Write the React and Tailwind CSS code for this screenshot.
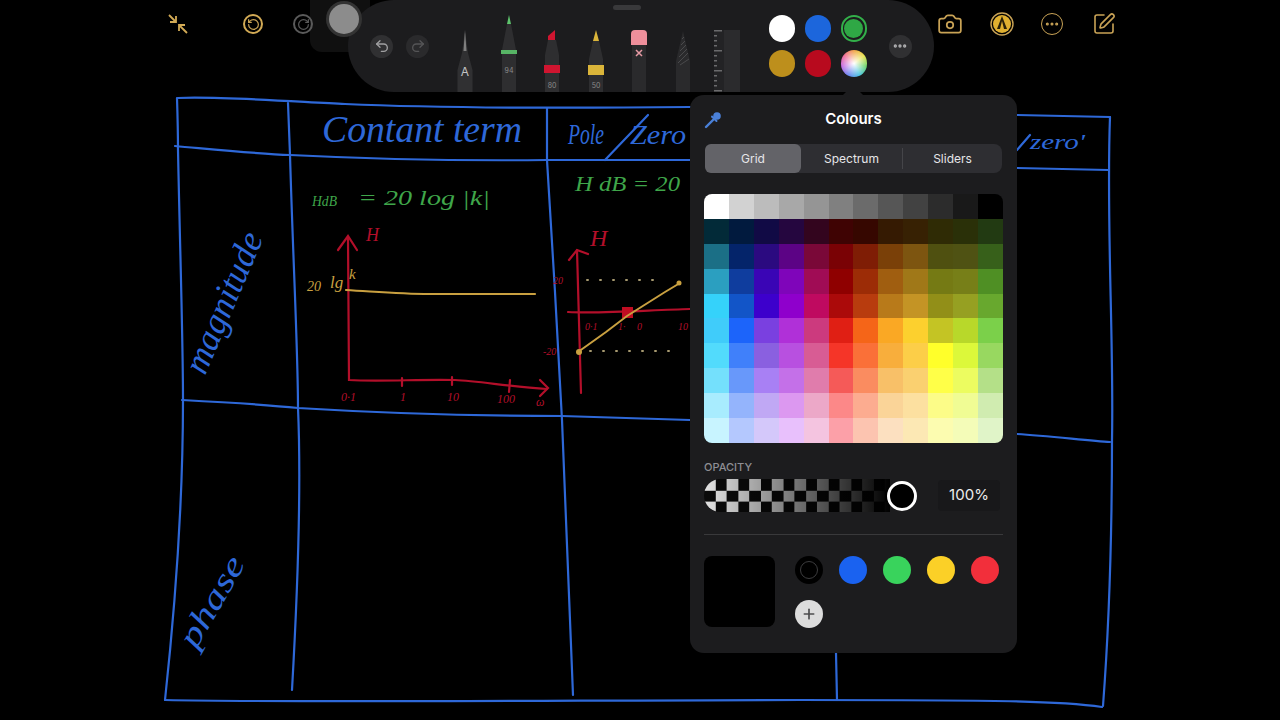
import { Camera, Ellipsis, Plus, Redo2, RotateCcw, RotateCw, SquarePen, Undo2 } from "lucide-react";

const GRID_COLORS = [
  "bg-[#ffffff]", "bg-[#d2d2d2]", "bg-[#bcbcbc]", "bg-[#a8a8a8]", "bg-[#959595]", "bg-[#808080]", "bg-[#6b6b6b]", "bg-[#565656]", "bg-[#424242]", "bg-[#2c2c2c]", "bg-[#191919]", "bg-[#000000]",
  "bg-[#022a38]", "bg-[#011a3e]", "bg-[#110a45]", "bg-[#25063f]", "bg-[#33051e]", "bg-[#3f0303]", "bg-[#360700]", "bg-[#351a02]", "bg-[#372103]", "bg-[#2f2b05]", "bg-[#2a3008]", "bg-[#223a12]",
  "bg-[#1b6f86]", "bg-[#04246a]", "bg-[#2b0a80]", "bg-[#5c0385]", "bg-[#7a0838]", "bg-[#7a0205]", "bg-[#7f1d05]", "bg-[#7a4008]", "bg-[#7d5510]", "bg-[#4f5010]", "bg-[#4f5213]", "bg-[#37601a]",
  "bg-[#2b9fc0]", "bg-[#0f3d9e]", "bg-[#3a05b5]", "bg-[#7f05ba]", "bg-[#a00c55]", "bg-[#8f0000]", "bg-[#9c2c06]", "bg-[#a05e10]", "bg-[#a07818]", "bg-[#757a14]", "bg-[#777f18]", "bg-[#4f8f24]",
  "bg-[#35d2fa]", "bg-[#1255c8]", "bg-[#3d00cc]", "bg-[#8f00cc]", "bg-[#bf0a60]", "bg-[#ab0a0a]", "bg-[#b83c0e]", "bg-[#b87a1a]", "bg-[#c49425]", "bg-[#928f18]", "bg-[#96a022]", "bg-[#68a82e]",
  "bg-[#40ccfa]", "bg-[#1c64fa]", "bg-[#7a40e0]", "bg-[#b030d8]", "bg-[#cc3a7e]", "bg-[#e01f14]", "bg-[#f56518]", "bg-[#faa824]", "bg-[#fcd02e]", "bg-[#c4c424]", "bg-[#b8d82a]", "bg-[#7bd04a]",
  "bg-[#52dbfc]", "bg-[#4080fa]", "bg-[#8a60e0]", "bg-[#b850e0]", "bg-[#d85c94]", "bg-[#f53528]", "bg-[#fa7038]", "bg-[#f8ae3c]", "bg-[#fcce48]", "bg-[#ffff2a]", "bg-[#dcf83a]", "bg-[#98d860]",
  "bg-[#74e0fc]", "bg-[#6898fa]", "bg-[#a880f4]", "bg-[#c470e8]", "bg-[#e07cac]", "bg-[#f55a58]", "bg-[#fa8c60]", "bg-[#f8c068]", "bg-[#fad070]", "bg-[#ffff48]", "bg-[#ecfc60]", "bg-[#b4e088]",
  "bg-[#a8ecfe]", "bg-[#94b4fc]", "bg-[#c0a8f4]", "bg-[#dc98f0]", "bg-[#eca8c8]", "bg-[#fc8888]", "bg-[#fcac90]", "bg-[#fad498]", "bg-[#fce0a0]", "bg-[#fcfc88]", "bg-[#f0fc94]", "bg-[#d0ecb0]",
  "bg-[#c8f4ff]", "bg-[#b4c8fe]", "bg-[#d4c8fa]", "bg-[#e8c0fc]", "bg-[#f4c4e0]", "bg-[#fca0a8]", "bg-[#fcc4b0]", "bg-[#fce0c0]", "bg-[#fce8b4]", "bg-[#fcfcb0]", "bg-[#f4fcb8]", "bg-[#e0f4c8]",
];

const BLUE = "#2e68d8";
const GREEN = "#3fa64a";
const RED = "#b30f2a";
const GOLD = "#c9a040";
const INK_FONT = "'Liberation Serif', serif";

const BLUE_LINES = [
  "M178 98 C 220 96 300 102 345 104 S 500 109 690 107",
  "M1017 115 L1110 117",
  "M177 98 C 178 130 178 145 178 150 C 180 250 183 340 183 400 C 183 480 178 580 165 700",
  "M175 146 C 220 150 260 154 290 155 C 350 158 450 161 547 160 L690 160",
  "M1017 168 L1108 170",
  "M288 103 L290 155 C 293 260 298 350 298 408 C 302 500 296 620 292 690",
  "M547 108 L547 160 C 552 240 558 340 562 420 C 566 520 570 620 573 695",
  "M182 400 C 220 402 270 405 298 408 C 380 413 480 416 562 416 L690 420",
  "M1017 434 C 1050 436 1090 441 1110 442",
  "M165 700 C 300 703 600 700 800 700 S 1060 701 1102 707",
  "M1110 117 C 1106 220 1114 340 1112 440 C 1112 540 1108 640 1103 706",
  "M836 653 L837 700",
  "M605 160 L648 115",
  "M1017 150 L1030 135",
];

const RED_LINES = [
  "M348 238 L349 380 C 380 382 420 379 455 380 C 480 381 510 387 547 389",
  "M338 250 L348 236 L357 250",
  "M540 380 L548 388 L540 396",
  "M402 378 L402 386 M452 377 L452 385 M510 380 L509 392",
  "M577 250 L581 393",
  "M568 312 C 600 314 650 310 690 309",
  "M569 260 L577 250 L588 254",
];

function Ink({ x, y, size, width, children, transform }) {
  return (
    <text x={x} y={y} fontSize={size} textLength={width} lengthAdjust="spacingAndGlyphs" transform={transform}>
      {children}
    </text>
  );
}

function Canvas() {
  return (
    <svg className="absolute inset-0 h-[720px] w-[1280px]" viewBox="0 0 1280 720" fill="none">
      <g stroke={BLUE} strokeWidth="2.2" strokeLinecap="round">
        {BLUE_LINES.map((d) => (
          <path key={d} d={d} />
        ))}
      </g>
      <g fill={BLUE} fontFamily={INK_FONT} fontStyle="italic">
        <Ink x={322} y={142} size={38} width={200}>Contant term</Ink>
        <Ink x={568} y={144} size={30} width={36}>Pole</Ink>
        <Ink x={630} y={144} size={28} width={56}>Zero</Ink>
        <Ink x={1030} y={149} size={22} width={55}>zero'</Ink>
        <Ink x={0} y={0} size={36} width={150} transform="translate(205 376) rotate(-67)">magnitude</Ink>
        <Ink x={0} y={0} size={33} width={100} transform="translate(196 650) rotate(-60)">phase</Ink>
      </g>
      <g fill={GREEN} fontFamily={INK_FONT} fontStyle="italic">
        <Ink x={312} y={206} size={15} width={25}>HdB</Ink>
        <Ink x={358} y={205} size={22} width={132}>= 20 log |k|</Ink>
        <Ink x={575} y={191} size={22} width={105}>H dB = 20</Ink>
      </g>
      <g stroke={RED} strokeWidth="2.2" strokeLinecap="round">
        {RED_LINES.map((d) => (
          <path key={d} d={d} />
        ))}
      </g>
      <rect x="622" y="307" width="11" height="11" fill="#c00d22" />
      <g fill={RED} fontFamily={INK_FONT} fontStyle="italic" fontSize="12">
        <text x="366" y="241" fontSize="18">H</text>
        <text x="341" y="401">0·1</text>
        <text x="400" y="401">1</text>
        <text x="447" y="401">10</text>
        <text x="497" y="403">100</text>
        <text x="536" y="406">ω</text>
        <text x="590" y="246" fontSize="24">H</text>
        <text x="553" y="284" fontSize="10">20</text>
        <text x="543" y="355" fontSize="10">-20</text>
        <text x="585" y="330" fontSize="10">0·1</text>
        <text x="618" y="330" fontSize="10">1·</text>
        <text x="637" y="330" fontSize="10">0</text>
        <text x="678" y="330" fontSize="10">10</text>
      </g>
      <path d="M346 290 C 380 292 400 294 430 294 L535 294" stroke={GOLD} strokeWidth="2.2" strokeLinecap="round" />
      <path d="M578 352 L606 332 L627 316 L665 292 L680 283" stroke={GOLD} strokeWidth="2" strokeLinecap="round" />
      <circle cx="579" cy="352" r="3" fill={GOLD} />
      <circle cx="679" cy="283" r="2.5" fill={GOLD} />
      <path d="M587 280 H665 M590 351 H680" stroke="#a79a70" strokeWidth="2" strokeLinecap="round" strokeDasharray="1 12" />
      <g fill={GOLD} fontFamily={INK_FONT} fontStyle="italic">
        <text x="307" y="291" fontSize="14">20</text>
        <text x="330" y="288" fontSize="17">lg</text>
        <text x="349" y="279" fontSize="15">k</text>
      </g>
    </svg>
  );
}

function CollapseIcon() {
  return (
    <svg className="h-5 w-5" viewBox="0 0 20 20" fill="none" stroke="#d2aa55" strokeWidth="1.8">
      <path d="M1 1 L8 8 M2 8 H8 V2" />
      <path d="M19 19 L11 11 M11 17 V11 H17" />
    </svg>
  );
}

function NibIcon() {
  return (
    <svg className="h-6 w-6" viewBox="0 0 24 24">
      <circle cx="12" cy="12" r="11" fill="none" stroke="#c9a356" strokeWidth="1.4" />
      <circle cx="12" cy="12" r="9" fill="#e0b030" />
      <path d="M12 4 L17 17 H7 Z" fill="#2a2108" />
      <path d="M12 9 L14 17 H10 Z" fill="#e0b030" />
    </svg>
  );
}

function TopIcons() {
  return (
    <div className="absolute left-0 top-0 z-20 flex h-12 w-[1280px] items-center pl-[168px] text-[#c9a356]">
      <CollapseIcon />
      <span className="ml-[55px] flex h-5 w-5 items-center justify-center rounded-full border-2 border-[#d2aa55]">
        <RotateCcw className="h-[13px] w-[13px]" strokeWidth={2.2} />
      </span>
      <span className="ml-[30px] flex h-5 w-5 items-center justify-center rounded-full border-2 border-[#5a5a5a] text-[#5a5a5a]">
        <RotateCw className="h-[13px] w-[13px]" strokeWidth={2.2} />
      </span>
      <span className="ml-[16px] -mt-[10px] h-[30px] w-[30px] rounded-full bg-[#8c8c8c] shadow-[0_0_0_3px_#333333]" />
      <Camera className="ml-[578px] h-[26px] w-[26px]" strokeWidth={1.6} />
      <span className="ml-[27px] flex"><NibIcon /></span>
      <span className="ml-[27px] flex h-[22px] w-[22px] items-center justify-center rounded-full border-[1.5px] border-[#c9a356]">
        <Ellipsis className="h-4 w-4" strokeWidth={2.6} />
      </span>
      <SquarePen className="ml-[29px] h-6 w-6" strokeWidth={1.6} />
    </div>
  );
}

function PencilTool() {
  return (
    <svg className="h-[77px] w-4 self-end" viewBox="0 0 16 77">
      <path d="M8 15 L11 38 L15.5 55 V77 H0.5 V55 L5 38 Z" fill="#303032" />
      <path d="M8 15 L9.5 36 H6.5 Z" fill="#808080" />
      <text x="8" y="61" fontSize="12" textAnchor="middle" fill="#c4c4c4" fontFamily="Inter, sans-serif">A</text>
    </svg>
  );
}

function PenTool() {
  return (
    <svg className="h-[77px] w-4 self-end" viewBox="0 0 16 77">
      <path d="M8 0 L10 9 H6 Z" fill="#5dc46c" />
      <path d="M6 9 H10 L15 35 V77 H1 V35 Z" fill="#2e2e30" />
      <rect x="0" y="35" width="16" height="4" fill="#57b465" />
      <text x="8" y="58" fontSize="7" textAnchor="middle" fill="#8a8a8a" fontFamily="Inter, sans-serif">94</text>
    </svg>
  );
}

function MarkerTool() {
  return (
    <svg className="h-[77px] w-4 self-end" viewBox="0 0 16 77">
      <path d="M4 25 V21 L11 15 V25 Z" fill="#d01530" />
      <path d="M4 25 H12 L15 40 V77 H1 V40 Z" fill="#2e2e30" />
      <rect x="0" y="50" width="16" height="8" fill="#d01530" />
      <text x="8" y="73" fontSize="7" textAnchor="middle" fill="#8a8a8a" fontFamily="Inter, sans-serif">80</text>
    </svg>
  );
}

function InkTool() {
  return (
    <svg className="h-[77px] w-4 self-end" viewBox="0 0 16 77">
      <path d="M8 15 L11 26 H5 Z" fill="#dbb53a" />
      <path d="M5 26 H11 L15 44 V77 H1 V44 Z" fill="#2e2e30" />
      <rect x="0" y="50" width="16" height="10" fill="#dbb53a" />
      <text x="8" y="73" fontSize="7" textAnchor="middle" fill="#8a8a8a" fontFamily="Inter, sans-serif">50</text>
    </svg>
  );
}

function EraserTool() {
  return (
    <svg className="h-[77px] w-4 self-end" viewBox="0 0 16 77">
      <path d="M0 30 V19 Q0 15 4 15 H12 Q16 15 16 19 V30 Z" fill="#ee8f9b" />
      <rect x="1" y="30" width="14" height="47" fill="#2a2a2c" />
      <path d="M5 35 L11 41 M11 35 L5 41" stroke="#e79aa4" strokeWidth="1.5" />
    </svg>
  );
}

function SmudgeTool() {
  return (
    <svg className="h-[77px] w-4 self-end" viewBox="0 0 16 77">
      <path d="M8 16 L15 46 V77 H1 V46 Z" fill="#2a2a2c" />
      <path d="M7 24 L9 22 M6 30 L10 26 M5 36 L11 30 M4 42 L12 34 M3 48 L13 38 M5 50 L14 44" stroke="#4a4a4c" strokeWidth="1" />
    </svg>
  );
}

function RulerTool() {
  const ticks = [0, 5, 10, 15, 20, 25, 30, 35, 40, 45, 50, 55, 60];
  return (
    <svg className="ml-[23px] h-[62px] w-[26px] self-end" viewBox="0 0 26 62">
      <rect x="0" y="0" width="26" height="62" fill="#2b2b2d" />
      <rect x="0" y="0" width="10" height="62" fill="#232325" />
      {ticks.map((y) => (
        <rect key={y} x="0" y={y} width={y % 20 === 0 ? 8 : 3} height="1.5" fill="#6a6a6c" />
      ))}
    </svg>
  );
}

function Toolbar() {
  return (
    <div className="absolute left-[348px] top-0 z-10 flex h-[92px] w-[586px] items-center rounded-[46px] bg-[#1c1c1e] pl-[22px]">
      <div className="absolute left-[265px] top-[5px] h-[5px] w-[28px] rounded-full bg-[#39393b]" />
      <span className="flex h-[23px] w-[23px] items-center justify-center rounded-full bg-[#303032] text-[#a0a0a2]">
        <Undo2 className="h-4 w-4" />
      </span>
      <span className="ml-[13px] flex h-[23px] w-[23px] items-center justify-center rounded-full bg-[#2a2a2c] text-[#555557]">
        <Redo2 className="h-4 w-4" />
      </span>
      <div className="ml-[28px] flex h-full gap-[27.5px]">
        <PencilTool />
        <PenTool />
        <MarkerTool />
        <InkTool />
        <EraserTool />
        <SmudgeTool />
      </div>
      <RulerTool />
      <div className="ml-[29px] grid grid-cols-[26px_26px_26px] gap-x-[10px] gap-y-[8px]">
        <span className="h-[27px] rounded-full bg-white" />
        <span className="h-[27px] rounded-full bg-[#1c66dc]" />
        <span className="flex h-[27px] items-center justify-center rounded-full border-2 border-[#33b04a]">
          <span className="h-[19px] w-[19px] rounded-full bg-[#2fa845]" />
        </span>
        <span className="h-[27px] rounded-full bg-[#bd8f1c]" />
        <span className="h-[27px] rounded-full bg-[#b80a1e]" />
        <span className="h-[27px] rounded-full bg-[radial-gradient(circle,#ffffff_0%,#ffffff00_75%),conic-gradient(#f0a040,#e8e040,#60d060,#40c0e0,#6080f0,#c060e0,#f06090,#f0a040)]" />
      </div>
      <span className="ml-[22px] flex h-[23px] w-[23px] items-center justify-center rounded-full bg-[#303032] text-[#b0b0b2]">
        <Ellipsis className="h-4 w-4" strokeWidth={3} />
      </span>
    </div>
  );
}

function EyedropperIcon() {
  return (
    <svg className="h-[18px] w-[18px]" viewBox="0 0 18 18" fill="none">
      <path d="M2 16 L10 8" stroke="#4a80d8" strokeWidth="2.4" strokeLinecap="round" />
      <circle cx="13" cy="5" r="3.8" fill="#4a80d8" />
      <path d="M8 5.5 L12.5 10" stroke="#4a80d8" strokeWidth="2" strokeLinecap="round" />
    </svg>
  );
}

function ColoursPopover() {
  return (
    <div className="absolute left-[690px] top-[95px] z-30 flex h-[558px] w-[327px] flex-col rounded-[14px] bg-[#1c1c1e] px-[14px] font-['Inter',sans-serif]">
      <div className="absolute left-[153px] top-[-10px] h-0 w-0 border-x-[10px] border-b-[10px] border-x-transparent border-b-[#1c1c1e]" />
      <div className="flex h-[49px] items-center justify-between">
        <EyedropperIcon />
        <span className="text-[15px] font-semibold text-white">Colours</span>
        <span className="w-[18px]" />
      </div>
      <div className="ml-px grid h-[29px] w-[297px] grid-cols-[96px_102px_99px] rounded-lg bg-[#2e2e32] text-[12px] text-[#e6e6e8]">
        <span className="flex items-center justify-center rounded-md bg-[#636368]">Grid</span>
        <span className="my-1 flex items-center justify-center border-r border-[#454549]">Spectrum</span>
        <span className="flex items-center justify-center">Sliders</span>
      </div>
      <div className="mt-[21px] grid h-[249px] w-[299px] grid-cols-12 grid-rows-10 overflow-hidden rounded-lg">
        {GRID_COLORS.map((color, i) => (
          <span key={i} className={color} />
        ))}
      </div>
      <div className="mt-[17px] text-[11px] font-medium leading-[14px] text-[#8e8e93]">OPACITY</div>
      <div className="mt-[5px] flex h-[33px] items-center">
        <div className="h-[33px] w-[186px] rounded-l-full bg-[linear-gradient(to_right,#00000000,#000000),conic-gradient(#0a0a0a_25%,#e4e4e4_0_50%,#0a0a0a_0_75%,#e4e4e4_0)] bg-[length:100%_100%,22.6px_22.6px]" />
        <span className="-ml-[3px] h-[30px] w-[30px] rounded-full border-[3px] border-white bg-black" />
        <span className="ml-[21px] flex h-[31px] w-[62px] items-center justify-center rounded bg-[#18181a] text-[15px] text-[#ececec]">100%</span>
      </div>
      <div className="mt-[22px] h-px w-[299px] bg-[#39393b]" />
      <div className="mt-[21px] flex gap-[19px]">
        <div className="h-[71px] w-[71px] rounded-lg bg-black" />
        <div className="grid grid-cols-[28px_28px_28px_28px_28px] gap-x-4 gap-y-4 pl-[1px]">
          <span className="flex h-[28px] items-center justify-center rounded-full bg-black">
            <span className="h-[18px] w-[18px] rounded-full border border-[#3c3c3e] bg-black" />
          </span>
          <span className="h-[28px] rounded-full bg-[#1a62f0]" />
          <span className="h-[28px] rounded-full bg-[#39d35c]" />
          <span className="h-[28px] rounded-full bg-[#fbd027]" />
          <span className="h-[28px] rounded-full bg-[#f22f3b]" />
          <span className="flex h-[28px] items-center justify-center rounded-full bg-[#dcdcdc] text-[#4c4c4e]">
            <Plus className="h-4 w-4" strokeWidth={2.5} />
          </span>
        </div>
      </div>
    </div>
  );
}

export default function App() {
  return (
    <div className="relative h-[720px] w-[1280px] overflow-hidden bg-black">
      <Canvas />
      <div className="absolute left-[310px] top-0 h-[52px] w-[60px] rounded-bl-xl bg-[#101010]" />
      <Toolbar />
      <TopIcons />
      <ColoursPopover />
    </div>
  );
}
